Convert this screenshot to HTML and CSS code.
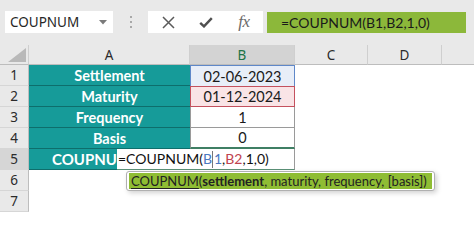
FILE: index.html
```html
<!DOCTYPE html>
<html>
<head>
<meta charset="utf-8">
<link rel="stylesheet" href="styles.css">
</head>
<body>
<div class="toolbar">
  <div class="namebox">
    <span class="name">COUPNUM</span>
    <svg class="dd" width="8" height="5" viewBox="0 0 8 5"><path d="M0 0 L8 0 L4 4.5 Z" fill="#7a7a7a"/></svg>
  </div>
  <div class="sep"><i></i><i></i><i></i></div>
  <div class="buttons">
    <div class="btn"><svg width="13" height="13" viewBox="0 0 13 13"><path d="M1 1 L12 12 M12 1 L1 12" stroke="#5a5a5a" stroke-width="1.5" fill="none"/></svg></div>
    <div class="btn"><svg width="14" height="11" viewBox="0 0 14 11"><path d="M1.2 5.8 L5 9.4 L12.8 1.2" stroke="#505050" stroke-width="2.4" fill="none"/></svg></div>
    <div class="btn fx">fx</div>
  </div>
  <div class="formula">=COUPNUM(B1,B2,1,0)</div>
</div>
<div class="sheet">
  <div class="hd corner"><svg width="18" height="14" viewBox="0 0 18 14"><path d="M18 0 L18 14 L0 14 Z" fill="#b9b9b9"/></svg></div>
  <div class="hd col">A</div>
  <div class="hd col sel">B</div>
  <div class="hd col">C</div>
  <div class="hd col">D</div>
  <div class="hd col"></div>

  <div class="hd row">1</div>
  <div class="c teal">Settlement</div>
  <div class="c b1">02-06-2023</div>
  <div class="c"></div><div class="c"></div><div class="c"></div>

  <div class="hd row">2</div>
  <div class="c teal">Maturity</div>
  <div class="c b2">01-12-2024</div>
  <div class="c"></div><div class="c"></div><div class="c"></div>

  <div class="hd row">3</div>
  <div class="c teal">Frequency</div>
  <div class="c bt">1</div>
  <div class="c"></div><div class="c"></div><div class="c"></div>

  <div class="hd row">4</div>
  <div class="c teal">Basis</div>
  <div class="c bt b4">0</div>
  <div class="c"></div><div class="c"></div><div class="c"></div>

  <div class="hd row rsel">5</div>
  <div class="c teal last"><span class="clip">COUPNUM</span></div>
  <div class="c b5"></div>
  <div class="c"></div><div class="c"></div><div class="c"></div>

  <div class="hd row">6</div>
  <div class="c"></div><div class="c"></div><div class="c"></div><div class="c"></div><div class="c"></div>

  <div class="hd row">7</div>
  <div class="c"></div><div class="c"></div><div class="c"></div><div class="c"></div><div class="c"></div>

  <div class="editor">=COUPNUM(<span class="rb">B</span><span class="caret"></span><span class="rb">1</span>,<span class="rr">B2</span>,1,0)</div>
  <div class="tip"><span class="tipin"><u>COUPNUM</u>(<b>settlement</b>, maturity, frequency, [basis])</span></div>
</div>
</body>
</html>
```
FILE: styles.css
```css
* { box-sizing: border-box; }
html, body { margin: 0; padding: 0; }
body {
  width: 474px;
  height: 212px;
  overflow: hidden;
  background: #ffffff;
  font-family: Lato, "Open Sans", sans-serif;
  color: #1a1a1a;
}
.toolbar {
  height: 45px;
  background: #e9e9e9;
  display: flex;
  align-items: flex-start;
  padding: 11px 0 0 5px;
}
.namebox {
  width: 108px;
  height: 22px;
  background: #fff;
  display: flex;
  align-items: center;
  padding-left: 5px;
  font-family: "Noto Sans", sans-serif;
  font-size: 13.5px;
  color: #262626;
}
.namebox .name { flex: 1; }
.namebox .dd { margin-right: 6px; }
.sep {
  width: 35px;
  height: 22px;
  display: flex;
  flex-direction: column;
  align-items: center;
  justify-content: center;
  gap: 3px;
}
.sep i {
  display: block;
  width: 2px;
  height: 2px;
  background: #a8a8a8;
}
.buttons {
  width: 115px;
  height: 22px;
  background: #fff;
  display: flex;
  align-items: center;
  padding-left: 1px;
}
.btn {
  width: 38px;
  display: flex;
  justify-content: center;
  align-items: center;
}
.fx {
  font-family: "Liberation Serif", serif;
  font-style: italic;
  font-size: 17px;
  color: #6a6a6a;
  letter-spacing: -0.5px;
}
.formula {
  margin: 1px 0 0 4px;
  width: 199px;
  height: 21px;
  background: #8cb83a;
  font-size: 14px;
  line-height: 21px;
  padding-left: 14px;
  color: #1a1a1a;
}
.sheet {
  position: relative;
  display: grid;
  grid-template-columns: 29px 161px 105px 73px 74px 40px;
  grid-template-rows: 20px repeat(7, 21px);
}
.hd {
  background: #e9e9e9;
  border-right: 1px solid #cfcfcf;
  border-bottom: 1px solid #bdbdbd;
  font-family: "Noto Sans", sans-serif;
  font-size: 13.5px;
  color: #2b2b2b;
  display: flex;
  align-items: center;
  justify-content: center;
}
.corner { justify-content: flex-end; align-items: flex-end; padding: 0 2px 2px 0; }
.col.sel { background: #d3d3d3; color: #217346; }
.row { border-right: 1px solid #bdbdbd; border-bottom: 1px solid #d6d6d6; }
.rsel { background: #d6d6d6; }
.c {
  font-size: 14.5px;
  display: flex;
  align-items: center;
  justify-content: center;
  white-space: nowrap;
  overflow: hidden;
}
.teal {
  background: #169b99;
  color: #ffffff;
  font-weight: 700;
  border-bottom: 1px solid #0e6e6c;
}
.teal.last { justify-content: flex-start; padding-left: 23px; }
.clip {
  display: block;
  width: 65px;
  overflow: hidden;
  font-size: 15px;
}
.b1 { background: #e8eef8; border: 1px solid #5f88c9; border-bottom: none; }
.b2 { background: #f9e4e6; border: 1px solid #c4515e; }
.bt { border-right: 1px solid #9a9a9a; border-left: 1px solid #9a9a9a; border-bottom: 1px solid #9a9a9a; }
.b4 { border-bottom: 2px solid #3f7f64; }
.b5 { border-right: 1px solid #9a9a9a; }
.editor {
  position: absolute;
  left: 117px;
  top: 104px;
  width: 178px;
  height: 21px;
  background: #fff;
  border-bottom: 1px solid #5b9077;
  border-right: 1px solid #9a9a9a;
  font-size: 14px;
  line-height: 20px;
  padding-left: 1px;
  color: #111;
  white-space: nowrap;
}
.rb { color: #4a78c0; }
.rr { color: #c0434f; }
.caret {
  display: inline-block;
  width: 1px;
  height: 17px;
  background: #777;
  vertical-align: -4px;
  margin: 0 0.5px;
}
.tip {
  position: absolute;
  left: 126px;
  top: 126px;
  width: 309px;
  height: 20px;
  background: #fff;
  border: 1px solid #b0b0b0;
  border-radius: 3px;
  box-shadow: 2px 2px 5px rgba(0,0,0,0.18);
  padding: 1px 2px;
  display: flex;
}
.tipin {
  flex: 1;
  background: #8fbd34;
  font-size: 13px;
  line-height: 16px;
  color: #222;
  padding-left: 2px;
  white-space: nowrap;
  overflow: hidden;
}
.tipin u { text-decoration-thickness: 1px; text-underline-offset: 2px; }
```
